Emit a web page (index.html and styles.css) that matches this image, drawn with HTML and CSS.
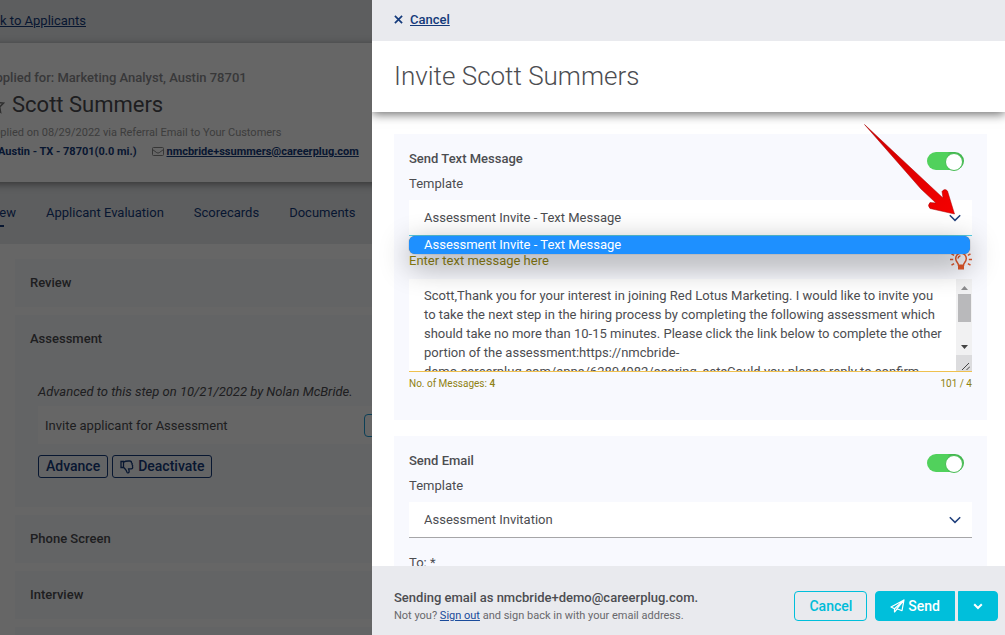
FILE: index.html
```html
<!DOCTYPE html>
<html lang="en">
<head>
<meta charset="utf-8">
<title>Invite Scott Summers</title>
<link rel="stylesheet" href="styles.css">
</head>
<body>
<div class="page">
  <div class="page-bar"><a href="#" class="back-link">Back to Applicants</a></div>
  <header class="applicant">
    <p class="applied-for">Applied for: Marketing Analyst, Austin 78701</p>
    <div class="name-row">
      <svg class="star" viewBox="0 0 18 18" aria-hidden="true"><path d="M9 1.5l2.3 5 5.2.6-3.8 3.8.9 5.4L9 13.7l-4.6 2.6.9-5.4L1.500 7.100l5.200-.6z"/></svg>
      <h1 class="name">Scott Summers</h1>
    </div>
    <p class="applied-on">Applied on 08/29/2022 via Referral Email to Your Customers</p>
    <div class="contact">
      <span class="place">Austin - TX - 78701(0.0 mi.)</span>
      <svg class="mail" viewBox="0 0 12 9" aria-hidden="true"><rect x=".5" y=".5" width="11" height="8" rx="1"/><path d="M.5 2.500l4.300 3.200q1.200.8 2.400 0l4.300-3.200"/></svg>
      <a href="#" class="mail-link">nmcbride+ssummers@careerplug.com</a>
    </div>
  </header>
  <nav class="tabs">
    <a href="#" class="tab tab-active">Overview</a>
    <a href="#" class="tab">Applicant Evaluation</a>
    <a href="#" class="tab">Scorecards</a>
    <a href="#" class="tab">Documents</a>
  </nav>
  <main class="steps">
    <section class="step"><h2 class="step-title">Review</h2></section>
    <section class="step">
      <h2 class="step-title">Assessment</h2>
      <div class="step-body">
        <p class="advanced">Advanced to this step on 10/21/2022 by Nolan McBride.</p>
        <div class="task"><span>Invite applicant for Assessment</span><button type="button" class="task-button" aria-label="Invite"></button></div>
        <div class="step-actions">
          <button type="button" class="outline">Advance</button>
          <button type="button" class="outline">
            <svg class="thumb" viewBox="0 0 14 14" aria-hidden="true"><path d="M1 1.500h2.500v6H1zM3.500 2.300C5 1.200 6.500 1 8.500 1h1.300c1.300 0 1.800.8 1.600 1.700.8.4 1 1.200.7 2 .7.6.7 1.400.4 2 .5 1.200 0 2.100-1.300 2.100H8.600c.4 1.200.7 2.100.5 3-.2 1-1.600 1.500-2.100.5-.5-1.100-.5-1.900-1.400-2.800L3.500 7.300"/></svg>
            Deactivate</button>
        </div>
      </div>
    </section>
    <section class="step"><h2 class="step-title">Phone Screen</h2></section>
    <section class="step"><h2 class="step-title">Interview</h2></section>
    <section class="step"><h2 class="step-title"></h2></section>
  </main>
</div>
<div class="backdrop"></div>
<aside class="drawer">
  <div class="drawer-bar">
    <svg class="close" viewBox="0 0 8 8" aria-hidden="true"><path d="M.8.8l6.400 6.400M7.200.8L.8 7.200"/></svg>
    <a href="#" class="cancel-link">Cancel</a>
  </div>
  <div class="drawer-head"><h2 class="drawer-title">Invite Scott Summers</h2></div>
  <form class="drawer-body" id="invite">
    <section class="card">
      <div class="card-head">
        <h3 class="card-title" id="text-title">Send Text Message</h3>
        <input type="checkbox" class="toggle" aria-labelledby="text-title" checked>
      </div>
      <label class="label" for="text-template">Template</label>
      <div class="select-wrap">
        <select class="select select-open" id="text-template"><option>Assessment Invite - Text Message</option></select>
        <svg class="chevron" viewBox="0 0 12 8" aria-hidden="true"><path d="M.8 1.200L6 6.400l5.200-5.200"/></svg>
        <ul class="options"><li class="option">Assessment Invite - Text Message</li></ul>
      </div>
      <div class="label-row">
        <label class="label label-warn" for="message">Enter text message here</label>
        <svg class="bulb" viewBox="0 0 22 19" aria-hidden="true"><path d="M8.500 14.200c0-2.400-2.800-3.300-2.800-6.700a5.300 5.300 0 0 1 10.600 0c0 3.400-2.800 4.300-2.800 6.700z"/><path d="M8 7.500q.2-2.200 2.400-2.700M0 8.500h3.200M18.800 8.500H22M1.500 2.800l2.600 1.600M20.500 2.800l-2.600 1.600M1.500 14.200l2.600-1.600M20.500 14.200l-2.600-1.600"/><path d="M9 16h4v1.500H9z" stroke-width="2"/></svg>
      </div>
      <div class="message-box">
        <textarea class="message" id="message">Scott,Thank you for your interest in joining Red Lotus Marketing. I would like to invite you to take the next step in the hiring process by completing the following assessment which should take no more than 10-15 minutes. Please click the link below to complete the other portion of the assessment:https://nmcbride-demo.careerplug.com/apps/62804982/scoring_setsCould you please reply to confirm</textarea>
        <div class="scroll" aria-hidden="true">
          <svg class="scroll-arrow" viewBox="0 0 7 4"><path d="M0 4l3.500-4L7 4z" fill="#8b8b8d"/></svg>
          <div class="scroll-thumb"></div>
          <svg class="scroll-arrow" viewBox="0 0 7 4"><path d="M0 0h7L3.500 4z" fill="#444"/></svg>
          <div class="grip"><svg class="grip-mark" viewBox="0 0 8 8"><path d="M0 8l7-7M4.500 8L8 4.500"/></svg></div>
        </div>
      </div>
      <div class="counts"><span>No. of Messages: <b class="strong">4</b></span><span>101 / 4</span></div>
    </section>
    <section class="card">
      <div class="card-head">
        <h3 class="card-title" id="email-title">Send Email</h3>
        <input type="checkbox" class="toggle" aria-labelledby="email-title" checked>
      </div>
      <label class="label" for="email-template">Template</label>
      <div class="select-wrap">
        <select class="select" id="email-template"><option>Assessment Invitation</option></select>
        <svg class="chevron" viewBox="0 0 12 8" aria-hidden="true"><path d="M.8 1.200L6 6.400l5.200-5.200"/></svg>
      </div>
      <label class="label" for="to">To: *</label>
      <input type="text" class="text-input" id="to">
    </section>
  </form>
  <footer class="drawer-foot">
    <div class="sender">
      <p class="sender-main">Sending email as nmcbride+demo@careerplug.com.</p>
      <p class="sender-note">Not you? <a href="#" class="sign-out">Sign out</a> and sign back in with your email address.</p>
    </div>
    <div class="foot-actions">
      <button type="button" class="btn btn-line">Cancel</button>
      <div class="split">
        <button type="submit" form="invite" class="btn btn-send">
          <svg class="plane" viewBox="0 0 15 14" aria-hidden="true"><path d="M14 1L1 8l3.500 1.700L14 1l-2 10.700-5-2L14 1M4.500 9.700V13L7 10"/></svg>
          Send</button>
        <button type="button" class="btn btn-more" aria-label="More send options"><svg class="more-mark" viewBox="0 0 10 7" aria-hidden="true"><path d="M1.200 1.200L5 5l3.800-3.800"/></svg></button>
      </div>
    </div>
  </footer>
</aside>
<svg class="pointer" viewBox="0 0 96 94" aria-hidden="true">
  <defs><linearGradient id="red" x1="0" y1="0" x2="1" y2="1"><stop offset="0" stop-color="#c00"/><stop offset="1" stop-color="#f50000"/></linearGradient></defs>
  <path fill="url(#red)" stroke="#a80000" stroke-width=".5" d="M3.500 2.500L82 76L81 69.500Q83.500 66 86.500 69L93.500 92L69 86.500Q66 83.500 69 80.500L75 81L60 67z"/>
</svg>
</body>
</html>
```
FILE: styles.css
```css
* { box-sizing: border-box; }
body {
  margin: 0;
  height: 100vh;
  overflow: hidden;
  font-family: Roboto, "Liberation Sans", sans-serif;
  font-size: 13px;
  line-height: 19px;
  color: #4c4d51;
  background: #fff;
}
h1, h2, h3, p, ul { margin: 0; padding: 0; }
svg { fill: none; flex: none; display: block; }
button, select, textarea, input { font: inherit; margin: 0; }

/* Applicant page */
.page { height: 100vh; margin-left: -41px; overflow: hidden; }
.page-bar { height: 43px; padding: 11px 19px; background: #e8eaed; }
.back-link { color: #143a7b; }
.applicant {
  position: relative;
  padding: 25px 28px 0;
  height: 139px;
  background: #fff;
  box-shadow: 0 2px 8px rgba(0, 0, 0, .45);
}
.applied-for { font-weight: 500; color: #8c8c90; }
.name-row { display: flex; align-items: center; gap: 7px; height: 36px; }
.star { width: 18px; height: 18px; stroke: #777; stroke-width: 1.5; }
.name { font-size: 22px; line-height: 32px; font-weight: 400; }
.applied-on { font-size: 11px; line-height: 20px; color: #999; }
.contact { display: flex; align-items: center; padding-left: 11px; font-size: 11px; line-height: 17px; font-weight: 700; color: #143a7b; }
.mail { width: 12px; height: 9px; margin: 0 3px 0 15px; stroke: #888; }
.mail-link { color: #143a7b; }
.tabs { display: flex; gap: 30px; height: 62px; padding-top: 21px; background: #e8eaed; }
.tab { height: 25px; color: #143a7b; text-decoration: none; }
.tab-active { width: 57px; text-align: right; }
.tab-active::after { content: ""; display: block; width: 45px; height: 2px; margin-top: 3px; background: #143a7b; }
.steps { display: flex; flex-direction: column; gap: 8px; padding: 15px 0 0 56px; }
.step { flex: none; padding: 14px 15px 15px; background: #f8f9fc; }
.step-title { min-height: 19px; font-size: 13px; font-weight: 500; }
.step-body { padding: 34px 0 14px 8px; }
.advanced { font-style: italic; }
.task { display: flex; justify-content: space-between; align-items: center; margin: 5px 0 11px; height: 38px; padding: 0 7px; background: #fff; max-width: 440px; }
.task-button { width: 107px; height: 23px; background: none; border: 1px solid #1d9dd6; border-radius: 4px; }
.step-actions { display: flex; gap: 4px; }
.outline { display: flex; align-items: center; gap: 4px; height: 23px; padding: 0 7px; font-size: 14px; font-weight: 500; color: #143a7b; background: none; border: 1px solid #143a7b; border-radius: 3px; }
.thumb { width: 14px; height: 14px; stroke: #143a7b; stroke-width: 1.3; }
.backdrop { position: fixed; inset: 0; background: rgba(0, 0, 0, .6); }

/* Invite drawer */
.drawer {
  position: fixed;
  top: 0;
  right: 0;
  bottom: 0;
  width: 633px;
  max-width: 100%;
  display: flex;
  flex-direction: column;
  background: #fff;
}
.drawer-bar { display: flex; align-items: center; gap: 7px; padding: 10px 22px 12px; background: #e9eaee; }
.close { width: 9px; height: 9px; stroke: #143a7b; stroke-width: 1.5; }
.cancel-link { font-weight: 500; color: #143a7b; }
.drawer-head { position: relative; padding: 19px 22px; box-shadow: 0 2px 10px rgba(0, 0, 0, .6); background: #fff; clip-path: inset(0 0 -24px 0); }
.drawer-title { font-size: 26px; line-height: 33px; font-weight: 300; }
.drawer-body { flex: 1; min-height: 0; overflow: hidden; padding: 22px 18px 0 22px; display: flex; flex-direction: column; gap: 16px; }
.card { flex: none; padding: 15px 15px 28px; background: #f8f9fe; }
.card-head { display: flex; justify-content: space-between; align-items: flex-start; padding-right: 8px; margin-bottom: 4px; }
.card-title { font-size: 13px; font-weight: 500; }
.toggle { appearance: none; width: 37px; height: 18px; margin-top: 3px; padding: 1px; border-radius: 9px; background: linear-gradient(90deg, #51d15c 55%, #43b74f 65%); display: flex; justify-content: flex-end; }
.toggle::before { content: ""; width: 16px; height: 16px; border-radius: 50%; background: #fff; border: 1px solid #48bd54; }
.label { display: block; }
.label-warn { color: #8f8213; }
.select-wrap { position: relative; margin: 7px 0 15px; }
.select { appearance: none; display: block; width: 100%; height: 36px; padding: 0 15px; border: 0; border-bottom: 1px solid #a6a6a8; border-radius: 0; background: #fff; color: #4c4d51; }
.select-open { border-bottom-color: #54cfe6; }
.chevron { position: absolute; right: 11px; top: 14px; width: 12px; height: 8px; stroke: #1f3f7c; stroke-width: 1.5; pointer-events: none; }
.options { position: absolute; top: 36px; left: 0; right: 2px; list-style: none; border-radius: 6px; background: #1e90ff; box-shadow: 0 0 1px #555, 0 10px 30px rgba(0, 0, 0, .45); }
.option { padding: 0 15px; line-height: 18px; color: #fff; }
.label-row { display: flex; justify-content: space-between; height: 19px; margin-bottom: 9px; }
.bulb { width: 22px; height: 19px; stroke: #e2572b; stroke-width: 1.5; }
.message-box { display: flex; height: 93px; background: #fff; border-bottom: 1px solid #efc14f; }
.message { flex: 1; min-width: 0; height: 92px; padding: 7px 12px 0 15px; border: 0; resize: none; overflow: hidden; outline: 0; background: none; color: #4c4d51; }
.scroll { display: flex; flex-direction: column; align-items: center; width: 16px; padding-top: 7px; background: #f1f1f2; }
.scroll-arrow { width: 7px; height: 4px; }
.scroll-thumb { width: 13px; height: 28px; margin: 4px 0 23px; background: #b9b9bb; }
.grip { width: 16px; height: 16px; margin-top: 6px; padding: 7px 2px 0 6px; background: #dcdcde; }
.grip-mark { width: 8px; height: 8px; stroke: #444; }
.counts { display: flex; justify-content: space-between; padding-top: 3px; font-size: 10px; line-height: 17px; color: #8f8213; }
.strong { font-weight: 500; }
.text-input { width: 100%; height: 37px; margin-top: 8px; border: 0; background: #fff; }
.drawer-foot { position: relative; display: flex; justify-content: space-between; align-items: flex-start; gap: 16px; padding: 22px 7px 11px 22px; background: #e9eaee; }
.sender-main { font-weight: 500; }
.sender-note { font-size: 11px; line-height: 17px; color: #68686c; }
.sign-out { color: #1a4b9b; }
.foot-actions { display: flex; gap: 8px; padding-top: 3px; }
.split { display: flex; gap: 3px; }
.btn { display: flex; align-items: center; justify-content: center; gap: 3px; height: 30px; padding: 0 14px; border: 1px solid #00bfdb; border-radius: 4px; font-size: 14px; font-weight: 500; color: #fff; background: #00bfdb; }
.btn-line { color: #00bcd9; background: none; }
.btn-send { border-radius: 4px 0 0 4px; }
.btn-more { width: 40px; border-radius: 0 4px 4px 0; }
.plane { width: 15px; height: 14px; stroke: #fff; stroke-width: 1.2; stroke-linejoin: round; }
.more-mark { width: 10px; height: 7px; stroke: #fff; stroke-width: 2; }

/* Annotation arrow */
.pointer { position: fixed; top: 122px; right: 48px; width: 96px; height: 94px; pointer-events: none; }
```
